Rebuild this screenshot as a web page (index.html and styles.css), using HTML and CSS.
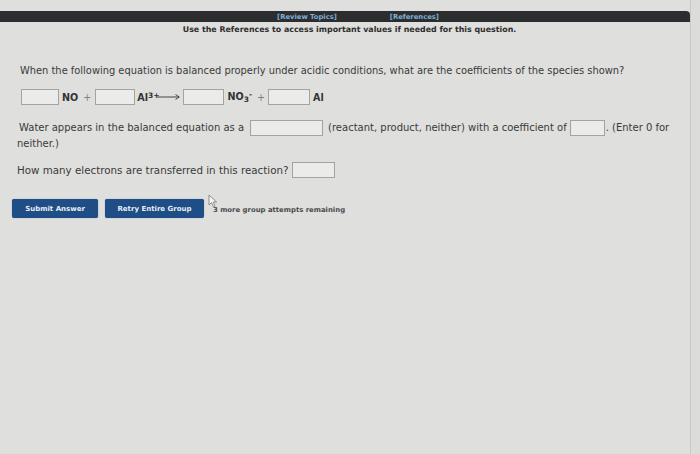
FILE: index.html
```html
<!DOCTYPE html>
<html>
<head>
<meta charset="utf-8">
<link rel="stylesheet" href="styles.css">
</head>
<body>
<div class="page">
  <div class="topbar">
    <a class="tlink">[Review Topics]</a>
    <a class="tlink">[References]</a>
  </div>
  <div class="notice">Use the References to access important values if needed for this question.</div>

  <p class="question">When the following equation is balanced properly under acidic conditions, what are the coefficients of the species shown?</p>

  <div class="equation">
    <span class="box b1"></span><span class="sp">NO</span><span class="plus">+</span>
    <span class="box b2"></span><span class="sp al">Al<sup>3+</sup></span>
    <svg class="arrow" width="23" height="8" viewBox="0 0 23 8"><line x1="0" y1="4" x2="22" y2="4" stroke="#444" stroke-width="1"/><polyline points="18.5,1.5 22.3,4 18.5,6.5" fill="none" stroke="#444" stroke-width="1"/></svg>
    <span class="box b3"></span><span class="sp">NO<sub>3</sub><sup>-</sup></span><span class="plus p2">+</span>
    <span class="box b4"></span><span class="sp">Al</span>
  </div>

  <div class="water">
    <span>Water appears in the balanced equation as a</span><span class="box wbox"></span><span>(reactant, product, neither) with a coefficient of</span><span class="box cbox"></span><span class="tight">. (Enter 0 for</span>
  </div>
  <div class="neither">neither.)</div>

  <div class="electrons">
    <span>How many electrons are transferred in this reaction?</span><span class="box ebox"></span>
  </div>

  <div class="actions">
    <button class="btn submit">Submit Answer</button>
    <button class="btn retry">Retry Entire Group</button>
    <svg class="cursor" width="10" height="14" viewBox="0 0 10 14"><path d="M1 1 L1 11 L3.5 8.6 L5.4 12.8 L7 12 L5.2 8 L8.6 8 Z" fill="#f4f4f2" stroke="#777" stroke-width="0.8"/></svg>
    <span class="remain">3 more group attempts remaining</span>
  </div>
</div>
</body>
</html>
```
FILE: styles.css
```css
html, body {
  margin: 0;
  padding: 0;
  background: #dcdcda;
}
body {
  width: 700px;
  height: 454px;
  overflow: hidden;
  font-family: "DejaVu Sans", Verdana, sans-serif;
  color: #3a3a3a;
}
.page {
  width: 691px;
  height: 454px;
  border-right: 1px solid #c9c9c7;
  background: #dfdfdd;
  padding-top: 11px;
  box-sizing: border-box;
}
.topbar {
  height: 11px;
  background: #2b2d2e;
  border-radius: 0 4px 0 0;
  display: flex;
  justify-content: center;
  align-items: center;
  gap: 53px;
  padding-left: 26px;
  box-sizing: border-box;
}
.tlink {
  color: #7eaed6;
  font-size: 6.8px;
  font-weight: bold;
}
.notice {
  text-align: center;
  font-size: 7.9px;
  font-weight: bold;
  color: #2e2e2e;
  margin-top: 3px;
  padding-left: 9px;
  line-height: 10px;
}
.question {
  margin: 30px 0 0 20px;
  font-size: 9.9px;
  line-height: 12px;
  color: #3a3a3a;
}
.equation {
  display: flex;
  align-items: center;
  margin: 12px 0 0 21px;
  font-size: 9.6px;
  font-weight: bold;
  color: #333;
  height: 16px;
}
.box {
  display: inline-block;
  height: 13px;
  background: #ebebe9;
  border: 1px solid #a3a3a1;
  box-sizing: content-box;
}
.b1 { width: 36px; height: 14px; }
.b2 { width: 38px; height: 14px; margin-left: 4px; }
.b3 { width: 39px; height: 14px; margin-left: 3px; }
.b4 { width: 40px; height: 14px; margin-left: 3px; }
.sp { margin-left: 3px; }
.sp sup, .sp sub { font-size: 7.5px; }
.sp sup { vertical-align: 3px; }
.sp sub { vertical-align: -2px; }
.plus { margin-left: 5px; font-weight: normal; color: #808080; }
.p2 { margin-left: 5px; }
.al { margin-left: 2px; }
.arrow { margin-left: -2px; }
.water {
  display: flex;
  align-items: center;
  margin: 14px 0 0 19px;
  font-size: 10px;
  height: 17px;
  white-space: nowrap;
}
.wbox { width: 71px; height: 14px; margin: 0 5px 0 6px; }
.cbox { width: 33px; height: 14px; margin-left: 3px; }
.tight { margin-left: 1px; }
.neither {
  margin: 1px 0 0 17px;
  font-size: 10px;
  line-height: 13px;
}
.electrons {
  display: flex;
  align-items: center;
  margin: 12px 0 0 17px;
  font-size: 10.3px;
  height: 16px;
}
.ebox { width: 41px; height: 14px; margin-left: 4px; }
.actions {
  display: flex;
  align-items: center;
  margin: 21px 0 0 12px;
  position: relative;
}
.btn {
  height: 19px;
  border: none;
  border-radius: 2px;
  background: #1f4d85;
  color: #e8eef6;
  font-family: "DejaVu Sans", Verdana, sans-serif;
  font-size: 7px;
  font-weight: bold;
  padding: 0;
  box-shadow: 0 0 1px #5a7aa5;
}
.submit { width: 86px; }
.retry { width: 99px; margin-left: 7px; }
.cursor {
  position: absolute;
  left: 196px;
  top: -5px;
}
.remain {
  margin-left: 9px;
  font-size: 6.9px;
  font-weight: bold;
  color: #4a4a4a;
  margin-top: 2px;
}
```
